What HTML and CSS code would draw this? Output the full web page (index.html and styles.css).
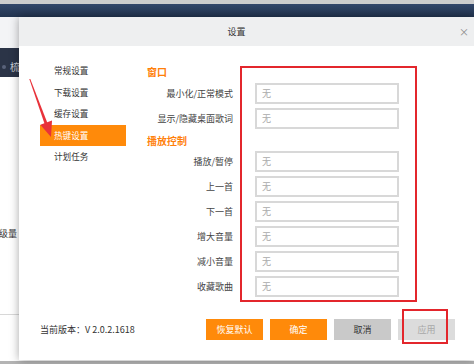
FILE: index.html
```html
<!DOCTYPE html>
<html lang="zh-CN">
<head>
<meta charset="utf-8">
<title>设置</title>
<link rel="stylesheet" href="styles.css">
</head>
<body>
<div class="app">
  <div class="app-topbar"></div>
  <div class="app-strip"></div>
  <div class="app-nav"><span class="app-dot"></span><span class="app-nav-text">梳</span></div>
  <div class="app-main"><span class="app-text">级量</span></div>
  <div class="app-line"></div>
  <div class="app-rest"></div>
  <div class="app-bottom"></div>
</div>

<div class="dialog">
  <div class="titlebar">
    <span></span>
    <span class="title">设置</span>
    <span class="close">×</span>
  </div>
  <div class="body">
    <ul class="menu">
      <li class="menu-item">常规设置</li>
      <li class="menu-item">下载设置</li>
      <li class="menu-item">缓存设置</li>
      <li class="menu-item active">热键设置</li>
      <li class="menu-item">计划任务</li>
    </ul>
    <div class="form">
      <div class="section">窗口</div>
      <div class="label">最小化/正常模式</div><div class="field">无</div>
      <div class="label">显示/隐藏桌面歌词</div><div class="field">无</div>
      <div class="section">播放控制</div>
      <div class="label">播放/暂停</div><div class="field">无</div>
      <div class="label">上一首</div><div class="field">无</div>
      <div class="label">下一首</div><div class="field">无</div>
      <div class="label">增大音量</div><div class="field">无</div>
      <div class="label">减小音量</div><div class="field">无</div>
      <div class="label">收藏歌曲</div><div class="field">无</div>
    </div>
  </div>
  <div class="footer">
    <span class="version">当前版本：V 2.0.2.1618</span>
    <div class="buttons">
      <button class="btn primary">恢复默认</button>
      <button class="btn primary">确定</button>
      <button class="btn cancel">取消</button>
      <button class="btn disabled">应用</button>
    </div>
  </div>
</div>

<div class="mark mark-fields"></div>
<div class="mark mark-apply"></div>
<svg class="arrow" width="70" height="150" viewBox="0 0 70 150">
  <polygon points="29.3,79 30.3,79 47.6,123.5 44.8,124.5" fill="#e8323a"/>
  <polygon points="51,137 40.3,124.8 52,120.5" fill="#e8323a"/>
</svg>
</body>
</html>
```
FILE: styles.css
```css
* { box-sizing: border-box; margin: 0; padding: 0; }
html, body { width: 474px; height: 364px; overflow: hidden; }
body {
  font-family: "Noto Sans CJK SC", "Noto Sans", "Liberation Sans", sans-serif;
  background: #ffffff;
  position: relative;
  color: #333;
}

/* background app */
.app { display: flex; flex-direction: column; height: 364px; }
.app-topbar { height: 17px; background: linear-gradient(#cdcdcd 0 4px, #33476a 4px, #22344f 17px); }
.app-strip { height: 31px; background: #f3f4f6; }
.app-nav { height: 29px; background: #2b3447; display: flex; align-items: center; padding-left: 2px; gap: 4px; padding-top: 8px; }
.app-dot { width: 4px; height: 4px; border-radius: 50%; background: #59627a; }
.app-nav-text { font-size: 10px; color: #c9ccd4; }
.app-main { height: 237px; padding-top: 151px; }
.app-text { font-size: 9px; line-height: 12px; color: #333; display: block; margin-left: -1px; }
.app-line { height: 1px; background: #d8d8d8; }
.app-rest { flex: 1; }
.app-bottom { height: 3px; background: #b4b4b4; }

/* dialog */
.dialog {
  position: absolute;
  left: 19px; top: 17px;
  width: 455px; height: 343px;
  background: #fff;
  box-shadow: 0 0 9px rgba(0, 0, 0, 0.35);
}
.titlebar {
  height: 29px;
  background: #eeeff0;
  display: grid;
  grid-template-columns: 1fr auto 1fr;
  align-items: center;
  font-size: 9px;
}
.title { color: #333; padding-right: 20px; }
.close { justify-self: end; margin-right: 5px; color: #8a8a8a; font-size: 10px; }

.body { display: flex; padding-left: 21px; align-items: flex-start; }
.menu { list-style: none; width: 86px; margin-top: 14px; }
.menu-item { height: 21.5px; line-height: 21.5px; padding-left: 14px; font-size: 8.6px; color: #333; }
.menu-item.active { background: #ff8a0a; color: #fff; }

.form {
  margin-left: 22px;
  margin-top: 18px;
  display: grid;
  grid-template-columns: 85px 144px;
  grid-template-rows: 15px 21px 21px 14px repeat(6, 21px);
  column-gap: 22px;
  row-gap: 4px;
}
.section { grid-column: 1 / 3; color: #ff7f0a; font-weight: bold; font-size: 10px; line-height: 15px; margin-left: -1px; display: flex; align-items: center; }
.label { text-align: right; font-size: 9px; line-height: 21px; color: #444; white-space: nowrap; }
.field {
  border: 2px solid #d8d8d8;
  font-size: 9px;
  line-height: 17px;
  padding-left: 5px;
  color: #aaa;
}

.footer {
  margin-top: 22px;
  height: 21px;
  display: flex;
  align-items: center;
  justify-content: space-between;
  padding: 0 19px 0 21px;
}
.version { font-size: 9px; color: #333; }
.buttons { display: flex; gap: 7px; }
.btn {
  width: 57px; height: 21px;
  border: none;
  font-family: inherit;
  font-size: 9px;
}
.btn.primary { background: #ff8a0a; color: #fff; }
.btn.cancel { background: #c9c9c9; color: #333; }
.btn.disabled { background: #dcdcdc; color: #a8a8a8; }

/* annotations */
.mark { position: absolute; border: 2px solid #e3262c; }
.mark-fields { left: 240px; top: 66px; width: 177px; height: 236px; }
.mark-apply { left: 402px; top: 309px; width: 46px; height: 35px; }
.arrow { position: absolute; left: 0; top: 0; }
```
